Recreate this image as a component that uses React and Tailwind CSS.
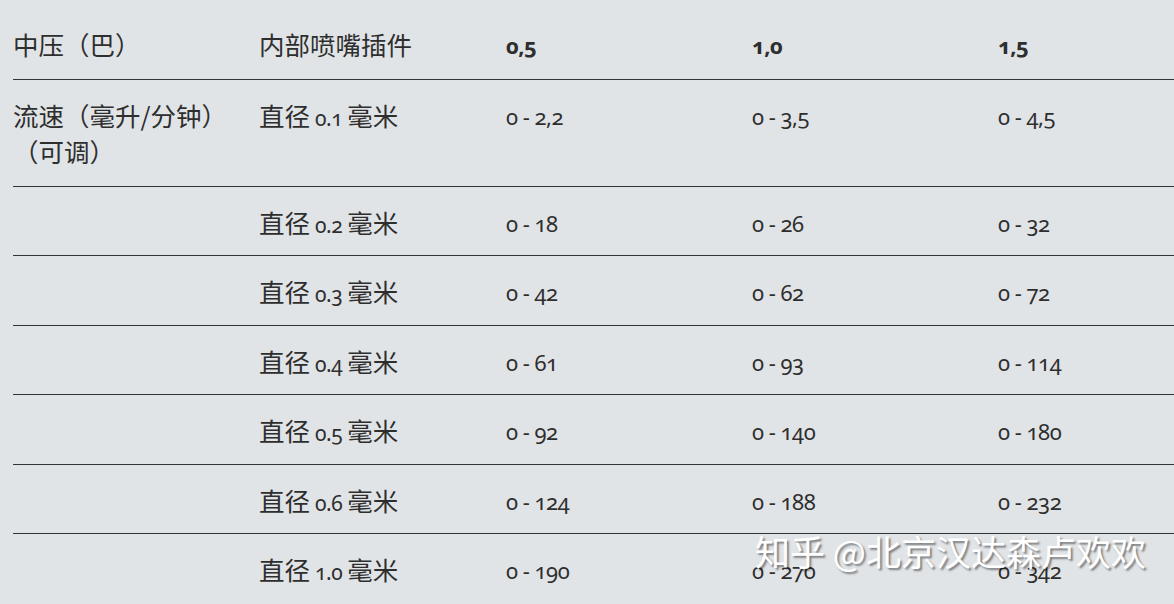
const rows = [
  { d: '0.1', v: ['0 - 2,2', '0 - 3,5', '0 - 4,5'], label: true, h: 'h-[107px]' },
  { d: '0.2', v: ['0 - 18', '0 - 26', '0 - 32'], h: 'h-[69px]' },
  { d: '0.3', v: ['0 - 42', '0 - 62', '0 - 72'], h: 'h-[70px]' },
  { d: '0.4', v: ['0 - 61', '0 - 93', '0 - 114'], h: 'h-[69px]' },
  { d: '0.5', v: ['0 - 92', '0 - 140', '0 - 180'], h: 'h-[70px]' },
  { d: '0.6', v: ['0 - 124', '0 - 188', '0 - 232'], h: 'h-[69px]' },
  { d: '1.0', v: ['0 - 190', '0 - 270', '0 - 342'], h: 'h-[80px]', last: true },
];

const cjk = "font-['Microsoft_YaHei','Noto_Sans_CJK_SC',sans-serif]";
const num = "font-['Noto_Sans','Noto_Sans_CJK_SC',sans-serif] [font-variant-numeric:oldstyle-nums] tracking-[-0.5px]";

function Row({ row }) {
  return (
    <div
      className={`grid grid-cols-[246px_247px_246px_246px_1fr] ${row.h} ${row.last ? '' : 'border-b border-[#343434]'} pt-[17px]`}
    >
      <div className={`${cjk} text-[25.5px] leading-[36px]`}>
        {row.label && (
          <>
            流速（毫升/分钟）
            <br />
            （可调）
          </>
        )}
      </div>
      <div className={`${cjk} text-[25.5px] leading-[36px]`}>
        直径<span className={`${num} text-[21px] mx-[5px]`}>{row.d}</span>毫米
      </div>
      {row.v.map((v, i) => (
        <div key={i} className={`${num} text-[22px] leading-[38px]`}>
          {v}
        </div>
      ))}
    </div>
  );
}

export default function App() {
  return (
    <div className="relative h-[604px] w-[1174px] overflow-hidden bg-[#e1e4e7] pl-[13px] text-[#2e2e2e]">
      <div className="grid h-[80px] grid-cols-[246px_247px_246px_246px_1fr] border-b border-[#343434] pt-[26px]">
        <div className={`${cjk} text-[25.5px] leading-[36px]`}>中压（巴）</div>
        <div className={`${cjk} text-[25.5px] leading-[36px]`}>内部喷嘴插件</div>
        <div className={`${num} text-[22px] font-bold leading-[38px]`}>0,5</div>
        <div className={`${num} text-[22px] font-bold leading-[38px]`}>1,0</div>
        <div className={`${num} text-[22px] font-bold leading-[38px]`}>1,5</div>
      </div>
      {rows.map((r) => (
        <Row key={r.d} row={r} />
      ))}
      <div
        className={`absolute left-[755px] top-[527px] ${cjk} text-[35px] leading-[48px] text-white [text-shadow:2px_2px_2px_rgba(0,0,0,0.45)] whitespace-nowrap`}
      >
        知乎 @北京汉达森卢欢欢
      </div>
    </div>
  );
}
